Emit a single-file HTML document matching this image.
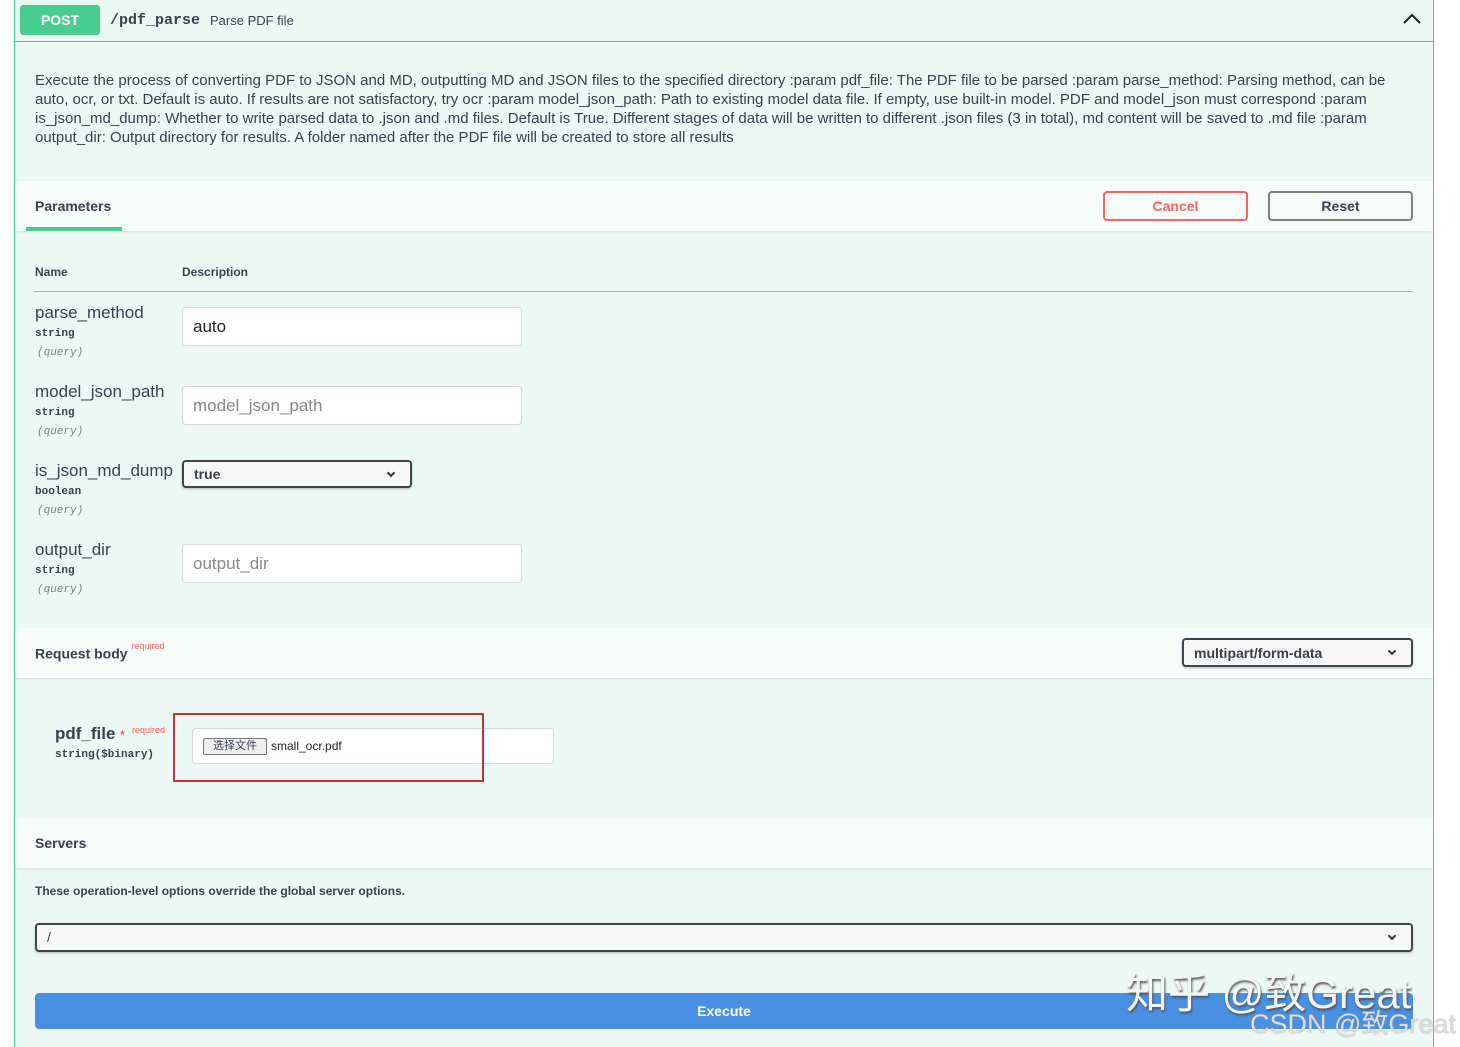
<!DOCTYPE html>
<html style="overflow:hidden;height:1047px"><head><meta charset="utf-8"><style>
*{box-sizing:border-box;margin:0;padding:0}
body{width:1460px;height:1047px;background:#fff;position:relative;overflow:hidden;font-family:"Liberation Sans","Noto Sans CJK SC",sans-serif;color:#3b4151}
.a{position:absolute}
.box{left:14px;top:-4px;width:1420px;height:1051px;border:1px solid #49cc90;border-bottom:none;background:#ebf8f3;border-radius:4px 4px 0 0}
.wh{left:15px;width:1418px;height:50px;background:#f7fcfa;box-shadow:0 1px 2px rgba(0,0,0,.1)}
.mono{font-family:"Liberation Mono",monospace}
.inp{background:#fff;border:1px solid #d9d9d9;border-radius:4px;height:39px;width:340px;left:182px;font-size:17px;padding:9px 10px}
.pn{left:35px;font-size:17px;color:#3b4151}
.ty{left:35px;font-size:11px;font-weight:bold;font-family:"Liberation Mono",monospace}
.q{left:37px;font-size:11px;font-style:italic;color:#808080;font-family:"Liberation Mono",monospace}
.sel{border:2px solid #41444e;border-radius:4px;background:#f7f7f7;font-weight:bold;font-size:14px;box-shadow:0 1px 2px rgba(0,0,0,.25)}
.chev{position:absolute;right:16px;top:8px;width:6px;height:6px;border-right:2px solid #333;border-bottom:2px solid #333;transform:rotate(45deg)}
</style></head><body>
<div class="a box"></div>
<div class="a" style="left:15px;top:41px;width:1418px;height:1px;background:#49cc90"></div>
<div class="a" style="left:20px;top:5px;width:80px;height:30px;background:#49cc90;border-radius:3px;color:#fff;font-weight:bold;font-size:14px;text-align:center;line-height:30px">POST</div>
<div class="a mono" style="left:110px;top:12px;font-size:15px;font-weight:bold;color:#3b4151">/pdf_parse</div>
<div class="a" style="left:210px;top:13px;font-size:13px">Parse PDF file</div>
<svg class="a" style="left:1402px;top:12px" width="20" height="14"><path d="M2 11 L10 3 L18 11" fill="none" stroke="#222" stroke-width="2"/></svg>
<div class="a" style="left:35px;top:71px;width:1380px;font-size:15px;line-height:19px;color:#3b4151">Execute the process of converting PDF to JSON and MD, outputting MD and JSON files to the specified directory :param pdf_file: The PDF file to be parsed :param parse_method: Parsing method, can be auto, ocr, or txt. Default is auto. If results are not satisfactory, try ocr :param model_json_path: Path to existing model data file. If empty, use built-in model. PDF and model_json must correspond :param is_json_md_dump: Whether to write parsed data to .json and .md files. Default is True. Different stages of data will be written to different .json files (3 in total), md content will be saved to .md file :param output_dir: Output directory for results. A folder named after the PDF file will be created to store all results</div>
<div class="a wh" style="top:181px"></div>
<div class="a" style="left:35px;top:198px;font-size:14px;font-weight:bold">Parameters</div>
<div class="a" style="left:26px;top:227px;width:96px;height:4px;background:#49cc90"></div>
<div class="a" style="left:1103px;top:191px;width:145px;height:30px;border:2px solid #ff6060;border-radius:4px;color:#ff6060;font-weight:bold;font-size:14px;text-align:center;line-height:26px;background:transparent">Cancel</div>
<div class="a" style="left:1268px;top:191px;width:145px;height:30px;border:2px solid #808080;border-radius:4px;font-weight:bold;font-size:14px;text-align:center;line-height:26px">Reset</div>
<div class="a" style="left:35px;top:265px;font-size:12px;font-weight:bold">Name</div>
<div class="a" style="left:182px;top:265px;font-size:12px;font-weight:bold">Description</div>
<div class="a" style="left:34px;top:291px;width:1379px;height:1px;background:#a5b3ad"></div>

<div class="a pn" style="top:303px">parse_method</div><div class="a ty" style="top:328px">string</div><div class="a q" style="top:347px">(query)</div>
<div class="a inp" style="top:307px;color:#222">auto</div>
<div class="a pn" style="top:382px">model_json_path</div><div class="a ty" style="top:407px">string</div><div class="a q" style="top:426px">(query)</div>
<div class="a inp" style="top:386px;color:#888">model_json_path</div>
<div class="a pn" style="top:461px">is_json_md_dump</div><div class="a ty" style="top:486px">boolean</div><div class="a q" style="top:505px">(query)</div>
<div class="a sel" style="left:182px;top:460px;width:230px;height:28px;padding:4px 10px">true<span class="chev"></span></div>
<div class="a pn" style="top:540px">output_dir</div><div class="a ty" style="top:565px">string</div><div class="a q" style="top:584px">(query)</div>
<div class="a inp" style="top:544px;color:#888">output_dir</div>

<div class="a wh" style="top:628px"></div>
<div class="a" style="left:35px;top:645px;font-size:14px;font-weight:bold">Request body <sup style="color:#ff6060;font-size:9px;font-weight:normal;position:relative;top:-4px">required</sup></div>
<div class="a sel" style="left:1182px;top:638px;width:231px;height:29px;padding:5px 10px">multipart/form-data<span class="chev"></span></div>
<div class="a" style="left:55px;top:724px;font-size:17px;font-weight:bold">pdf_file <span style="color:#ff6060;font-size:12px">*</span></div>
<div class="a" style="left:132px;top:725px;font-size:9px;color:#ff6060">required</div>
<div class="a mono" style="left:55px;top:749px;font-size:11px;font-weight:bold">string($binary)</div>
<div class="a" style="left:192px;top:728px;width:362px;height:36px;background:#fff;border:1px solid #d9d9d9;border-radius:4px"></div>
<div class="a" style="left:203px;top:738px;width:64px;height:17px;background:#efefef;border:1px solid #767676;border-radius:2px;font-size:11px;text-align:center;line-height:15px">选择文件</div>
<div class="a" style="left:271px;top:739px;font-size:12px;color:#222">small_ocr.pdf</div>
<div class="a" style="left:173px;top:713px;width:311px;height:69px;border:2px solid #c9303a"></div>

<div class="a wh" style="top:818px"></div>
<div class="a" style="left:35px;top:835px;font-size:14px;font-weight:bold">Servers</div>
<div class="a" style="left:35px;top:884px;font-size:12px;font-weight:bold">These operation-level options override the global server options.</div>
<div class="a sel" style="left:35px;top:923px;width:1378px;height:29px;padding:4px 10px;font-weight:normal">/<span class="chev"></span></div>
<div class="a" style="left:35px;top:993px;width:1378px;height:36px;background:#4990e2;border-radius:4px;color:#fff;font-weight:bold;font-size:14px;text-align:center;line-height:36px">Execute</div>
<div class="a" style="left:1126px;top:960px;font-size:42px;color:#f4f4f4;text-shadow:1px 2px 2px #555;white-space:nowrap">知乎 @致Great</div>
<div class="a" style="left:1250px;top:1002px;font-size:27px;color:#ddd;text-shadow:0 0 1px #888;white-space:nowrap">CSDN @致Great</div>
</body></html>
